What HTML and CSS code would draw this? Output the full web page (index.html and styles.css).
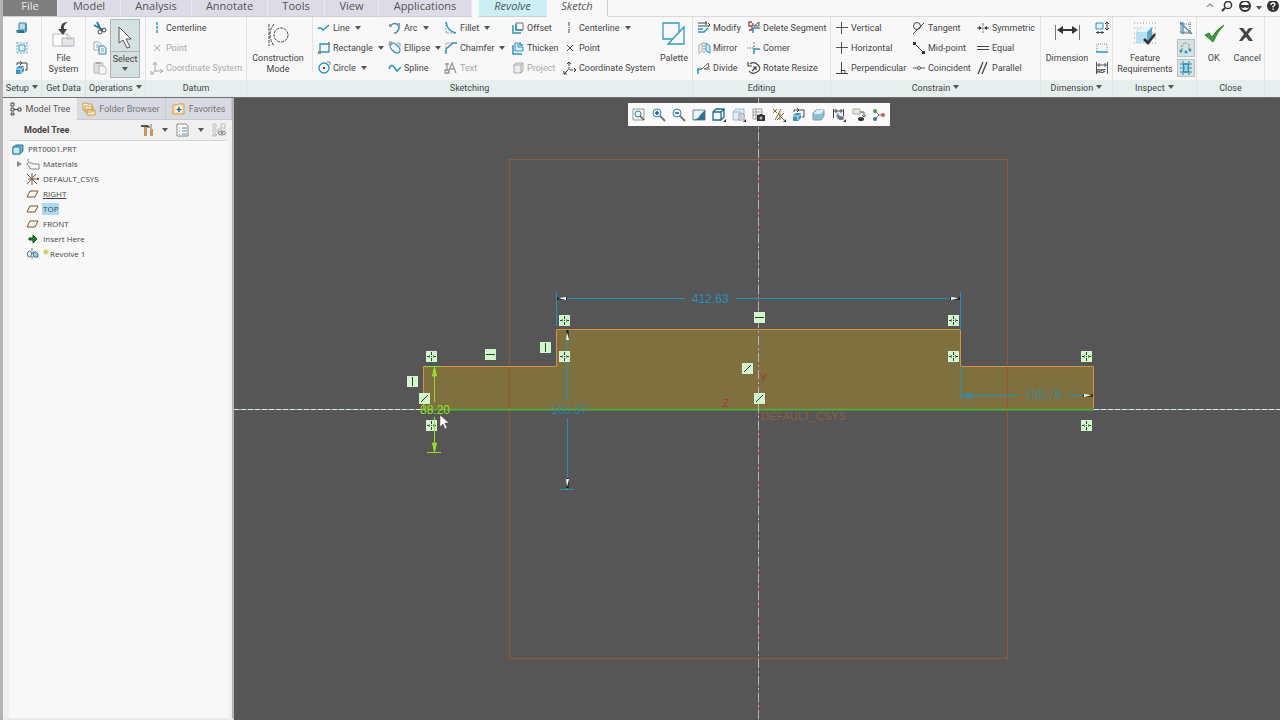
FILE: index.html
```html
<!DOCTYPE html>
<html lang="en">
<head>
  <meta charset="UTF-8">
  <meta name="viewport" content="width=device-width, initial-scale=1.0">
  <title>PRT0001 - Sketch</title>
  <link rel="stylesheet" href="styles.css">
</head>
<body>
  <nav class="tabs">
    <button class="tab file">File</button>
    <button class="tab model">Model</button>
    <button class="tab analysis">Analysis</button>
    <button class="tab annotate">Annotate</button>
    <button class="tab tools-tab">Tools</button>
    <button class="tab view">View</button>
    <button class="tab applications">Applications</button>
    <button class="tab revolve">Revolve</button>
    <button class="tab sketch">Sketch</button>
    <div class="corner">
      <button aria-label="Minimize ribbon"><svg width="12" height="14"><path d="M2 6l4-4 4 4H8L6 4 4 6z" fill="#999"/></svg></button>
      <button aria-label="Search"><svg width="14" height="14"><circle cx="8" cy="4" r="3.6" fill="none" stroke="#333" stroke-width="1.5"/><path d="M5 7L2 10" stroke="#333" stroke-width="2"/></svg></button>
      <button aria-label="Learning"><svg width="14" height="14"><circle cx="7" cy="5" r="5" fill="none" stroke="#333" stroke-width="2"/><path d="M3 4h8v2q-2 2-4 0-2 2-4 0z" fill="#333"/></svg></button>
      <i class="caret"></i>
      <button aria-label="Help"><svg width="14" height="14"><circle cx="7" cy="5" r="6" fill="#333"/><path d="M5 4q0-2 2-2t2 1.500q0 1-2 2v1M7 7.500v1.500" stroke="#fff" stroke-width="1.300" fill="none"/></svg></button>
    </div>
  </nav>

  <header class="ribbon">
    <section class="group setup">
      <div class="body stack">
        <button aria-label="Sketch setup"><svg class="ic"><path d="M4 2h7v7H4z" fill="#b9dcea" stroke="#2c86a8"/><path d="M1 9h8v3H2z" fill="#2c86a8"/><path d="M4 11h7V3" stroke="#1c5f7c" fill="none"/></svg></button>
        <button aria-label="References"><svg class="ic"><path d="M4 4h6v6H4z" fill="#e3f3f8" stroke="#2ba0c4"/><path d="M2 1v12M12 1v12M2 2h10M2 12h10" stroke="#6ab7d1" stroke-dasharray="2 1" fill="none"/></svg></button>
        <button aria-label="Sketch view"><svg class="ic"><path d="M1 7l3-2h5v5l-3 3H1z" fill="#3a96ba"/><path d="M1 8h5v4M6 8l3-2" stroke="#d7eef6" fill="none"/><path d="M6 2h6v7h-2" stroke="#444" fill="none"/><path d="M2 4V2h4M5 0l2 2-2 2" stroke="#444" fill="none"/></svg></button>
      </div>
      <button class="label">Setup <i class="caret"></i></button>
    </section>

    <section class="group getdata">
      <div class="body center">
        <button class="big"><svg class="big-ic" viewBox="0 0 28 28"><path d="M4 13h14l5 5v7H4z" fill="#fff" stroke="#b5b8be"/><path d="M13 17h12v8H13z" fill="#e4e6ea" stroke="#b5b8be"/><path d="M18 13v5h5" stroke="#b5b8be" fill="none"/><path d="M19 1q-8 0-7 7H9l5 6 4-6h-3q-1-4 4-7z" fill="#444"/></svg>File<br>System</button>
      </div>
      <div class="label">Get Data</div>
    </section>

    <section class="group operations">
      <div class="body row">
        <div class="stack">
          <button aria-label="Cut"><svg class="ic"><path d="M4 1l4 8M1 4l9 5" stroke="#287fa1" stroke-width="2"/><circle cx="11" cy="9" r="2" fill="none" stroke="#444"/><circle cx="7" cy="11" r="2" fill="none" stroke="#444"/></svg></button>
          <button aria-label="Copy"><svg class="ic"><path d="M1 1h5l2 2v6H1z" fill="#fff" stroke="#aaa"/><path d="M6 5h5l2 2v6H6z" fill="#eaf5fa" stroke="#3487a5"/><path d="M8 8h3M8 10h3M3 4h3M3 6h3" stroke="#77a9bb"/></svg></button>
          <button aria-label="Paste"><svg class="ic"><path d="M1 2h9v10H1z" fill="#ddd" stroke="#bbb"/><path d="M3 1h5v2H3z" fill="#aaa"/><path d="M6 5h5l2 2v6H6z" fill="#f5f5f5" stroke="#bbb"/></svg></button>
        </div>
        <button class="select"><span class="select-top"><svg width="20" height="28"><path d="M4 4v16l4-3 4 8 3-1-4-8h5z" fill="#fff" stroke="#555"/></svg></span>Select<i class="caret"></i></button>
      </div>
      <button class="label">Operations <i class="caret"></i></button>
    </section>

    <section class="group datum">
      <div class="body tools">
        <button><svg class="ic"><path d="M7 1v12" stroke="#2a9bc0" stroke-width="1.500" stroke-dasharray="3 1"/></svg>Centerline</button>
        <button disabled><svg class="ic"><path d="M4 4l6 6M10 4l-6 6" stroke="#aaa"/></svg>Point</button>
        <button disabled><svg class="ic"><path d="M5 2v8h8M5 10l-4 3M3 4l2-3 2 3M10 8l3 2-3 2M1 10v3h3" stroke="#aaa" fill="none"/></svg>Coordinate System</button>
      </div>
      <div class="label">Datum</div>
    </section>

    <section class="group sketching">
      <div class="body row">
        <button class="big construction"><svg class="big-ic" viewBox="0 0 28 28"><path d="M5 3v22M10 3q-8 10 0 22" stroke="#444" stroke-dasharray="3 1" fill="none"/><circle cx="17" cy="14" r="7" fill="none" stroke="#444" stroke-dasharray="3 1"/></svg>Construction<br>Mode</button>
        <div class="tools">
          <button><svg class="ic"><path d="M1 8q2-3 5 1l6-5" stroke="#2893bd" stroke-width="1.500" fill="none"/></svg>Line<i class="caret"></i></button>
          <button><svg class="ic"><path d="M3 3h9v8H3z" stroke="#2893bd" stroke-width="1.300" fill="none"/><path d="M1 10h3v3H1zM11 1h2v3h-2z" fill="#888"/></svg>Rectangle<i class="caret"></i></button>
          <button><svg class="ic"><circle cx="7" cy="7" r="5" stroke="#2893bd" stroke-width="1.300" fill="none"/><circle cx="7" cy="7" r="1.300" fill="#555"/><path d="M10 1h3v3" stroke="#888" fill="none"/></svg>Circle<i class="caret"></i></button>
          <button><svg class="ic"><path d="M3 4q4-3 7 0t-2 8" stroke="#2893bd" stroke-width="1.500" fill="none"/><path d="M1 3h3v3H1zM10 2h2v3h-2zM6 11h2v2H6z" fill="#999"/></svg>Arc<i class="caret"></i></button>
          <button><svg class="ic"><ellipse cx="7" cy="7" rx="6" ry="3.500" transform="rotate(45 7 7)" stroke="#2893bd" stroke-width="1.300" fill="none"/><path d="M1 1h3v3H1zM9 2h3v3" stroke="#999" fill="none"/></svg>Ellipse<i class="caret"></i></button>
          <button><svg class="ic"><path d="M1 8q2-6 5-2t3 4 4-4" stroke="#2893bd" stroke-width="1.500" fill="none"/></svg>Spline</button>
          <button><svg class="ic"><path d="M2 1v11h10" stroke="#999" stroke-dasharray="2 1" fill="none"/><path d="M2 1q1 9 10 11" stroke="#2893bd" stroke-width="1.500" fill="none"/></svg>Fillet<i class="caret"></i></button>
          <button><svg class="ic"><path d="M2 13V8l7-6h4" stroke="#2893bd" stroke-width="1.500" fill="none"/><path d="M2 7V2h6" stroke="#999" stroke-dasharray="2 1" fill="none"/></svg>Chamfer<i class="caret"></i></button>
          <button disabled><svg class="ic"><path d="M4 12l4-10 4 10M6 8h5M3 2v8M1 3h4M1 9h4v3H1z" stroke="#999" stroke-width="1.300" fill="none"/></svg>Text</button>
          <button><svg class="ic"><path d="M5 2h7v7H5z" stroke="#777" fill="none"/><path d="M2 4v8h8M5 3v6h7" stroke="#2893bd" stroke-width="1.500" fill="none"/></svg>Offset</button>
          <button><svg class="ic"><path d="M4 2h3v4h5v4H4z" stroke="#2893bd" fill="#d9eff7"/><path d="M2 4v9h9M9 1v3h3" stroke="#2893bd" stroke-width="1.500" fill="none"/></svg>Thicken</button>
          <button disabled><svg class="ic"><path d="M3 4l2-2h7v8l-2 2H3zM3 4h7v8M10 4l2-2" stroke="#aaa" fill="#eee"/></svg>Project</button>
          <button><svg class="ic"><path d="M6 1v12" stroke="#444" stroke-dasharray="4 1 1 1"/></svg>Centerline<i class="caret"></i></button>
          <button><svg class="ic"><path d="M4 4l6 6M10 4l-6 6" stroke="#444"/></svg>Point</button>
          <button><svg class="ic"><path d="M6 2v7h7" stroke="#444" stroke-dasharray="3 1" fill="none"/><path d="M5 9l-4 4M1 10v3h3M4 3l2-2 2 2M11 7l2 2-2 2" stroke="#333" fill="none"/></svg>Coordinate System</button>
        </div>
        <button class="big palette"><svg class="big-ic" viewBox="0 0 28 28"><path d="M3 2h16v16H3z" stroke="#2d9bc5" stroke-width="1.300" fill="none"/><path d="M24 6v17H8z" stroke="#2d9bc5" stroke-width="1.300" fill="#f8f8f8"/></svg>Palette</button>
      </div>
      <div class="label">Sketching</div>
    </section>

    <section class="group editing">
      <div class="body tools">
        <button><svg class="ic"><path d="M1 2h9M1 5h11M9 0v4M11 2l2 2-2 2" stroke="#444" fill="none"/><path d="M1 11h6l4-4M1 8h5" stroke="#2893bd" stroke-width="1.500" fill="none"/></svg>Modify</button>
        <button><svg class="ic"><path d="M2 4l3-2v8l-3 2z" fill="none" stroke="#aaa"/><path d="M7 1v12" stroke="#888" stroke-dasharray="2 1"/><path d="M9 2l4 3v7l-4-2z" fill="#d1ebf5" stroke="#2893bd"/></svg>Mirror</button>
        <button><svg class="ic"><path d="M1 13V8h4" stroke="#2893bd" stroke-width="1.500" fill="none"/><path d="M7 8h6M5 8l6-6 1 4-5 2" stroke="#666" fill="none"/></svg>Divide</button>
        <button><svg class="ic"><path d="M5 1H2v4h3v4H2M6 5V2" stroke="#a5443f" stroke-width="1.300" fill="none"/><path d="M6 12V7h7" stroke="#2893bd" stroke-width="1.500" fill="none"/><path d="M7 5l5-4v4z" stroke="#555" fill="none"/></svg>Delete Segment</button>
        <button><svg class="ic"><path d="M7 13V8h6" stroke="#2893bd" stroke-width="1.500" fill="none"/><path d="M7 1v6H0" stroke="#777" stroke-dasharray="2 1" fill="none"/></svg>Corner</button>
        <button><svg class="ic"><path d="M3 3q4-3 8 1t-1 7-8-1M1 1v4h4M5 10l4-4M6 6h3v3" stroke="#444" fill="none" stroke-width="1.200"/></svg>Rotate Resize</button>
      </div>
      <div class="label">Editing</div>
    </section>

    <section class="group constrain">
      <div class="body tools">
        <button><svg class="ic"><path d="M6.500 1v12M1 6.500h12" stroke="#555"/></svg>Vertical</button>
        <button><svg class="ic"><path d="M6.500 1v12M1 6.500h12" stroke="#555"/></svg>Horizontal</button>
        <button><svg class="ic"><path d="M6.500 1v11M1 12.500h12M6 9.500h4v3" stroke="#444" fill="none"/></svg>Perpendicular</button>
        <button><svg class="ic"><circle cx="5" cy="5" r="3.500" fill="none" stroke="#444"/><path d="M1 13L12 2" stroke="#444"/></svg>Tangent</button>
        <button><svg class="ic"><path d="M2 2l9 9" stroke="#444"/><path d="M1 1h3v3H1zM10 10h3v3h-3z" fill="#333"/></svg>Mid-point</button>
        <button><svg class="ic"><path d="M1 7h4M9 7h4" stroke="#555"/><circle cx="7" cy="7" r="1.500" stroke="#555" fill="none"/></svg>Coincident</button>
        <button><svg class="ic"><path d="M7 2v10" stroke="#777" stroke-dasharray="3 1"/><path d="M1 7h4M9 7h4" stroke="#333"/><path d="M3 5l3 2-3 2zM11 5L8 7l3 2z" fill="#333"/></svg>Symmetric</button>
        <button><svg class="ic"><path d="M1 5.500h12M1 8.500h12" stroke="#444"/></svg>Equal</button>
        <button><svg class="ic"><path d="M2 13L7 1M6 13L11 1" stroke="#444" stroke-width="1.300"/></svg>Parallel</button>
      </div>
      <button class="label">Constrain <i class="caret"></i></button>
    </section>

    <section class="group dimension">
      <div class="body row">
        <button class="big"><svg class="big-ic" viewBox="0 0 28 28"><path d="M2.500 4v15M26.500 4v15" stroke="#777"/><path d="M7 9h14" stroke="#333" stroke-width="2"/><path d="M4 9l6-4v8zM25 9l-6-4v8z" fill="#333"/></svg>Dimension</button>
        <div class="stack">
          <button aria-label="Perimeter"><svg class="ic"><path d="M1 2h7v6H1z" stroke="#2893bd" fill="#e3f3f8"/><path d="M12 1v8M10 3l2-2 2 2M10 7l2 2 2-2M1 11.500h8M3 10v3M7 10v3" stroke="#444" fill="none"/></svg></button>
          <button aria-label="Baseline"><svg class="ic"><path d="M2 10V3h10v7" stroke="#888" stroke-dasharray="1 1" fill="none"/><path d="M1 11h12" stroke="#2893bd" stroke-width="1.500"/></svg></button>
          <button aria-label="Reference dimension"><svg class="ic"><path d="M1.500 1v12M12.500 1v12M2 4h10M4 2v4M10 2v4" stroke="#555"/><text x="2" y="12" font-size="5" font-weight="700" fill="#333">REF</text></svg></button>
        </div>
      </div>
      <button class="label">Dimension <i class="caret"></i></button>
    </section>

    <section class="group inspect">
      <div class="body row">
        <button class="big"><svg class="big-ic" viewBox="0 0 28 28"><path d="M3 2h22M3 7h22M3 12h22M3 17h22M3 22h22" stroke="#999" stroke-dasharray="1 2"/><path d="M5 11l5-5h11v11l-5 5H5z" fill="#5aa9c8"/><path d="M5 11h11v11H5z" fill="#b6e1f2"/><path d="M5 11l5-5h11l-5 5z" fill="#e4f6fc"/><path d="M13 18l4 4 7-9" stroke="#333" stroke-width="2.500" fill="none"/></svg>Feature<br>Requirements</button>
        <div class="stack">
          <button aria-label="Overlapping geometry"><svg class="ic"><path d="M2 12V2l10 10z" stroke="#777" fill="none"/><path d="M1 1l12 12M4 1v12" stroke="#2893bd" stroke-width="1.300"/><path d="M1 11h12M11 1v12M1 3h12" stroke="#777" stroke-dasharray="1 1"/></svg></button>
          <button class="on" aria-label="Highlight open ends"><svg class="ic"><path d="M3 9V4q4-4 7 0v4" stroke="#888" stroke-dasharray="2 1" fill="none"/><circle cx="2" cy="10" r="1.500" fill="#2893bd"/><circle cx="7" cy="11" r="1.500" fill="#2893bd"/><circle cx="11" cy="9" r="1.500" fill="#2893bd"/></svg></button>
          <button class="on" aria-label="Shade closed loops"><svg class="ic"><path d="M4 3h6L9 7l1 4H4l1-4z" fill="#9fd3e6" stroke="#1f86ae" stroke-width="1.300"/><path d="M1 3h2M11 3h2M1 7h3M10 7h3M1 11h2M11 11h2M4 0v2M10 0v2M4 12v2M10 12v2" stroke="#1f86ae"/></svg></button>
        </div>
      </div>
      <button class="label">Inspect <i class="caret"></i></button>
    </section>

    <section class="group close">
      <div class="body row">
        <button class="big"><svg class="big-ic" viewBox="0 0 28 28"><path d="M5 14l4-2 3 4q5-8 12-12Q17 11 13 21z" fill="#3c9f3d" stroke="#287d2d"/></svg>OK</button>
        <button class="big"><svg class="big-ic" viewBox="0 0 28 28"><path d="M6 7h4l3 4 3-4h4l-5 6 5 7h-4l-3-4-4 4H6l5-7z" fill="#444"/></svg>Cancel</button>
      </div>
      <div class="label">Close</div>
    </section>
    <div class="group rest"><div class="body"></div><div class="label"></div></div>
  </header>

  <main>
    <aside>
      <div class="side-tabs">
        <button class="active"><svg class="ic"><path d="M2 1h3v3H2zM2 6h3v3H2zM2 11h3v2H2zM9 6h3v3H9zM5 7.500h4" stroke="#444" fill="none"/></svg>Model Tree</button>
        <button><svg class="ic"><path d="M1 1h4l1 1h4v6H1zM3 4h4l1 1h3v5H3zM5 7h3l1 1h4v5H5z" fill="#fff0cb" stroke="#c79c4f"/></svg>Folder Browser</button>
        <button><svg class="ic"><path d="M1 3h4l1-1h6v10H1z" fill="#fbe1a6" stroke="#d0a254"/><path d="M4 5h6v5H4z" fill="#fff"/><path d="M7 5v5M4.500 7.500h5" stroke="#246b9b" stroke-width="1.500"/></svg>Favorites</button>
      </div>
      <div class="tree-head">
        <h2>Model Tree</h2>
        <button aria-label="Settings"><svg class="ic"><path d="M1 2h7l2 2-1 1-3-1H1z" fill="#555"/><path d="M4 4h3v9H4z" fill="#c99753"/><path d="M11 1v6" stroke="#777"/><path d="M10 6h3v7h-3z" fill="#c99753"/></svg></button>
        <i class="caret"></i>
        <button aria-label="Show"><svg class="ic"><path d="M1 1h9l2 2v10H1z" fill="#fff" stroke="#888"/><path d="M3 5h1M6 5h5M3 8h1M6 8h5M3 11h1M6 11h5" stroke="#4b88a0"/></svg></button>
        <i class="caret"></i>
        <button class="filter" aria-label="Tree filters"><svg class="ic"><path d="M1 1h3v3H1zM1 6h3v3H1zM1 11h3v2H1zM6 6h3v3H6zM9 1h4v4H9z" fill="none" stroke="#bbb"/><ellipse cx="10" cy="10" rx="4" ry="2" fill="#ddd" stroke="#888"/><circle cx="10" cy="10" r="1" fill="#777"/></svg></button>
      </div>
      <ul class="tree">
        <li class="root"><svg class="ic"><path d="M2 5l3-2h7v6l-3 3H2z" fill="#5eb4d6" stroke="#2b7b9e"/><path d="M2 5h7v7H2z" fill="#c5e9f7" stroke="#2b7b9e"/></svg><span>PRT0001.PRT</span></li>
        <li class="parent"><i class="arrow"></i><svg class="ic"><path d="M3 2q-3 1 0 3-4 2 0 4 0 3 3 3h7V7H7L6 6H3" fill="none" stroke="#888"/></svg><span>Materials</span></li>
        <li><svg class="ic"><path d="M1 2l10 10M1 12L10 2M6 1v12M2 7h10" stroke="#73573a"/><circle cx="12" cy="7" r="1" fill="#444"/></svg><span>DEFAULT_CSYS</span></li>
        <li><svg class="ic"><path d="M4 4h8l-3 6H1z" fill="#fffaf2" stroke="#75532c"/></svg><span class="under">RIGHT</span></li>
        <li><svg class="ic"><path d="M4 4h8l-3 6H1z" fill="#fffaf2" stroke="#75532c"/></svg><span class="picked">TOP</span></li>
        <li><svg class="ic"><path d="M4 4h8l-3 6H1z" fill="#fffaf2" stroke="#75532c"/></svg><span>FRONT</span></li>
        <li><svg class="ic"><path d="M3 6h4V3l4 4-4 4V8H3z" fill="#128a22" stroke="#0b5514"/></svg><span>Insert Here</span></li>
        <li><svg class="ic"><path d="M6 1v12" stroke="#777" stroke-dasharray="3 1"/><ellipse cx="3.500" cy="7" rx="2" ry="3" fill="none" stroke="#4b7d92"/><path d="M7 5h3l2 2v3H8z" fill="#98cde1" stroke="#2b7b9e"/></svg><span><svg class="star" viewBox="0 0 8 8"><path d="M4 0v8M0 4h8M1 1l6 6M7 1L1 7" stroke="#c8b400"/></svg>Revolve 1</span></li>
      </ul>
    </aside>

    <div class="canvas">
      <svg class="drawing" viewBox="234 98 1046 622" preserveAspectRatio="xMidYMid slice">
        <defs>
          <g id="sym"><rect class="badge" width="11" height="11"/><path d="M5.500 1v3M5.500 5v1M5.500 7v3M1 5.500h3M7 5.500h3" stroke="#24452a"/><path d="M3.500 4v3M7.500 4v3" stroke="#6d9270"/></g>
          <g id="hor"><rect class="badge" width="11" height="11"/><path d="M1 5.500h9" stroke="#24452a"/></g>
          <g id="ver"><rect class="badge" width="11" height="11"/><path d="M5.500 1v9" stroke="#24452a"/></g>
          <g id="coin"><rect class="badge" width="11" height="11"/><path d="M2 9l7-7" stroke="#24452a"/></g>
        </defs>
        <!-- shaded section -->
        <path class="shade" d="M423.500 409V366.500H556.500V329.500H960.500V366.500H1093.500V409z"/>
        <!-- datum planes -->
        <rect class="plane" x="509.500" y="159.500" width="498" height="499"/>
        <path class="outline" d="M423.500 409V366.500H556.500V329.500H960.500V366.500H1093.500V409"/>
        <path d="M234 409.500h190M1094 409.500h190" stroke="#6fa3a0"/>
        <path d="M234 409.500h190M1094 409.500h190" stroke="#e4e4e4" stroke-dasharray="5 2"/>
        <path class="plane" d="M424 408.500h670"/>
        <path class="axis" d="M424 409.500h670"/>
        <path d="M758.500 98v622" stroke="#a65b63"/>
        <path d="M758.500 98v622" stroke="#b7b2b8" stroke-dasharray="9 3 2 3"/>
        <!-- weak dimensions -->
        <g class="weak">
          <path d="M556.500 292v34M960.500 292v38M557 298.500h128M736 298.500h224"/>
          <path d="M567.500 330v70M567.500 418v71M560 489.500h14"/>
          <path d="M960.500 366v35M961 395.500h57M1068 395.500h25"/>
          <path d="M961 395.500l10-2v4z" class="head"/>
          <text x="692" y="303">412.63</text>
          <text class="faint" x="551" y="414">163.37</text>
          <text class="faint" x="1025" y="399">135.76</text>
        </g>
        <g class="tip">
          <path d="M557 298.500h10M960 298.500h-10M567.500 330v10M567.500 488v-10M1093 395.500h-10"/>
        </g>
        <g class="white-head">
          <path d="M558 298l8-1v3zM959 298l-8-1v3zM567 332l-1 8h3zM567 487l-1-8h3zM1092 395l-8-1v3z"/>
        </g>
        <g class="csys">
          <text x="760" y="382">Y</text><text x="760" y="405">X</text><text x="723" y="407">Z</text>
          <text class="csys-name" x="761" y="420">DEFAULT_CSYS</text>
        </g>
        <use href="#sym" x="559" y="315"/><use href="#sym" x="559" y="351"/>
        <use href="#sym" x="948" y="315"/><use href="#sym" x="948" y="351"/>
        <use href="#sym" x="426" y="351"/><use href="#sym" x="426" y="420"/>
        <use href="#sym" x="1081" y="351"/><use href="#sym" x="1081" y="420"/>
        <use href="#hor" x="485" y="349"/><use href="#hor" x="754" y="312"/>
        <use href="#ver" x="540" y="342"/><use href="#ver" x="407" y="376"/>
        <use href="#coin" x="742" y="363"/><use href="#coin" x="754" y="393"/><use href="#coin" x="419" y="393"/>
        <!-- dimension being dragged -->
        <g class="active-dim">
          <path d="M424 366.500h17M434.500 367v35M434.500 417v35M427 452.500h14"/>
          <path class="head" d="M434.500 367l-2 9h4zM434.500 452l-2-9h4z"/>
          <text x="420" y="414">88.20</text>
        </g>
        <path d="M440 415v12l3-3 2 5 2-1-2-5h4z" fill="#fff" stroke="#444" stroke-width=".5"/>
      </svg>

      <div class="view-bar">
        <button aria-label="Refit"><svg class="ic"><path d="M1 1h11v11H1z" fill="#f4f4f4" stroke="#999"/><circle cx="6" cy="6" r="3" fill="#e2f3fa" stroke="#447f97"/><path d="M8 8l4 4" stroke="#555" stroke-width="1.500"/></svg></button>
        <button aria-label="Zoom in"><svg class="ic"><circle cx="5" cy="5" r="4" fill="#e2f3fa" stroke="#447f97"/><path d="M3 5h4M5 3v4" stroke="#17668a" stroke-width="1.500"/><path d="M8 8l5 5" stroke="#777" stroke-width="2"/></svg></button>
        <button aria-label="Zoom out"><svg class="ic"><circle cx="5" cy="5" r="4" fill="#e2f3fa" stroke="#447f97"/><path d="M3 5h4" stroke="#17668a" stroke-width="1.500"/><path d="M8 8l5 5" stroke="#777" stroke-width="2"/></svg></button>
        <button aria-label="Repaint"><svg class="ic"><path d="M1 2h12v10H1z" fill="#e6f2f6" stroke="#6a8c99"/><path d="M13 2v10H1q6-1 7-5z" fill="#2b7391"/></svg></button>
        <button aria-label="Display style"><svg class="ic"><path d="M1 4l3-3h8v8l-3 3H1zM1 4h8v8M9 4l3-3" fill="#f4fbfd" stroke="#1f6c8b" stroke-width="1.300"/><path d="M14 11v3h-3z" fill="#333"/></svg></button>
        <button aria-label="Saved orientations"><svg class="ic"><path d="M1 4l3-3h8v8l-3 3H1zM1 4h8v8" fill="#dceef5" stroke="#97bfcd"/><path d="M7 6h5v6H7z" fill="#fff" stroke="#999"/><path d="M8 8h3M8 10h3" stroke="#999"/><path d="M14 11v3h-3z" fill="#333"/></svg></button>
        <button aria-label="View manager"><svg class="ic"><path d="M1 1h9v10H1zM1 4h9M1 7h9M4 1v10" fill="#fff" stroke="#999"/><path d="M5 7h2l1-1h2l1 1h2v6H5z" fill="#333"/><circle cx="9" cy="10" r="1.500" fill="#bbb"/></svg></button>
        <button aria-label="Datum display"><svg class="ic"><path d="M1 1l4 4M5 1L1 5M3 12L9 1M8 5v7M5 12l7-7M6 6l6 6" stroke="#85662c" fill="none"/><path d="M14 11v3h-3z" fill="#333"/></svg></button>
        <button aria-label="Sketch view"><svg class="ic"><path d="M1 7l3-2h5v5l-3 3H1z" fill="#3a96ba"/><path d="M1 8h5v4M6 8l3-2" stroke="#d7eef6" fill="none"/><path d="M7 2h5v7h-2M2 4V2h4M5 0l2 2-2 2" stroke="#444" fill="none"/></svg></button>
        <button aria-label="Clip model"><svg class="ic"><path d="M1 5l3-3h8v6l-3 4H1z" fill="#8bbfd2" stroke="#7e9da8"/><path d="M2 5l3-3h7L9 6H2z" fill="#d8eef6"/></svg></button>
        <button aria-label="Dimension display"><svg class="ic"><path d="M1.500 1v9M11.500 1v7M2 3h9M4 1v4M9 1v4" stroke="#444"/><path d="M6 5v6M4 8h4" stroke="#2b7391"/><ellipse cx="9" cy="10" rx="3" ry="2" fill="#777"/><path d="M14 11v3h-3z" fill="#333"/></svg></button>
        <button aria-label="Annotation display"><svg class="ic"><path d="M1 1h7v5H1z" fill="#eee6d4" stroke="#aaa"/><path d="M8 4h4v5M10 7l2 2 2-2" stroke="#555" fill="none"/><ellipse cx="9" cy="11" rx="3" ry="2" fill="#333"/></svg></button>
        <button aria-label="Spin center"><svg class="ic"><path d="M3 3l4 4-4 4M7 7h5" stroke="#777" fill="none"/><circle cx="3" cy="3" r="2" fill="#4b9b5a"/><circle cx="3" cy="11" r="2" fill="#2f7ca0"/><circle cx="11" cy="7" r="2" fill="#d2584a"/></svg></button>
      </div>
    </div>
  </main>
</body>
</html>
```

FILE: styles.css
```css
* {
  margin: 0;
  padding: 0;
  box-sizing: border-box;
}

body {
  display: flex;
  flex-direction: column;
  height: 100vh;
  overflow: hidden;
  border-left: 3px solid #b4b4b4;
  background-color: #f8f8f8;
  color: #444;
  font-family: "Open Sans", "Noto Sans", sans-serif;
  font-size: 9px;
  line-height: 12px;
}

button {
  border: none;
  background: none;
  color: inherit;
  font: inherit;
}

svg {
  display: block;
  flex: none;
}

.ic {
  width: 14px;
  height: 14px;
}

.caret {
  display: inline-block;
  flex: none;
  border: 3px solid transparent;
  border-top: 4px solid #555;
  border-bottom: none;
}

/* Tabs */
.tabs {
  display: flex;
  flex: none;
  height: 17px;
}

.tab {
  height: 17px;
  padding-bottom: 4px;
  border-right: 1px solid #e9e8ef;
  border-bottom: 1px solid #cfcfd6;
  background-color: #dddce6;
  color: #555;
  font-size: 11px;
}

.tab.file {
  width: 55px;
  background-color: #7f7f7f;
  color: #e8e8e8;
}

.tab.model {
  width: 63px;
}

.tab.analysis {
  width: 71px;
}

.tab.annotate {
  width: 76px;
}

.tab.tools-tab {
  width: 57px;
}

.tab.view {
  width: 54px;
}

.tab.applications {
  width: 93px;
}

.tab.revolve {
  width: 68px;
  margin-left: 7px;
  background-color: #caf0f5;
  font-style: italic;
}

.tab.sketch {
  width: 61px;
  border-right: 1px solid #cfcfd6;
  border-bottom-color: #f8f8f8;
  background-color: #f8f8f8;
  font-style: italic;
}

.corner {
  display: flex;
  flex: 1;
  align-items: center;
  justify-content: flex-end;
  gap: 4px;
  border-bottom: 1px solid #dcdcdf;
}

/* Ribbon */
.ribbon {
  display: flex;
  flex: none;
  height: 81px;
  border-bottom: 1px solid #6e7070;
  font-family: Roboto, "Open Sans", sans-serif;
}

.group {
  display: flex;
  flex: none;
  flex-direction: column;
  border-right: 1px solid #dfe3e3;
}

.body {
  height: 63px;
}

.row {
  display: flex;
}

.center {
  display: flex;
  justify-content: center;
}

.label {
  height: 17px;
  background-color: #e6eeee;
  line-height: 17px;
  text-align: center;
}

.label .caret {
  margin: 0 0 2px 1px;
}

.setup {
  width: 39px;
}

.getdata {
  width: 44px;
}

.operations {
  width: 60px;
}

.datum {
  width: 101px;
}

.sketching {
  width: 446px;
}

.editing {
  width: 138px;
}

.constrain {
  width: 210px;
}

.dimension {
  width: 72px;
}

.inspect {
  width: 84px;
}

.close {
  width: 68px;
}

.rest {
  flex: 1;
  border: none;
}

.stack {
  display: flex;
  flex-direction: column;
  align-items: center;
  padding-top: 1px;
}

.stack button {
  display: flex;
  align-items: center;
  justify-content: center;
  width: 18px;
  height: 18px;
  margin: 1px 0;
}

.stack .on {
  border: 1px solid #b5c3c3;
  background-color: #d5e0e0;
}

.big {
  display: flow-root;
  align-self: flex-start;
  line-height: 11px;
  text-align: center;
}

.big-ic {
  width: 28px;
  height: 28px;
  margin: 4px auto;
}

.tools {
  display: grid;
  grid-auto-flow: column;
  grid-template-rows: repeat(3, 20px);
  padding-top: 1px;
}

.tools button {
  display: flex;
  align-items: center;
  gap: 2px;
  white-space: nowrap;
}

.tools button:disabled {
  color: #aaa;
}

.tools .caret {
  margin-left: 3px;
}

.operations .row {
  padding-left: 5px;
}

.select {
  width: 30px;
  height: 59px;
  margin: 2px 0 0 1px;
  border: 1px solid #a9b6b6;
  background-color: #d5e0e0;
  line-height: 11px;
}

.select-top {
  display: flex;
  justify-content: center;
  height: 29px;
  margin-bottom: 2px;
  border-bottom: 1px solid #a9b6b6;
}

.select .caret {
  display: block;
  width: 6px;
  margin: 2px auto 4px;
}

.datum .tools {
  padding-left: 4px;
}

.construction {
  width: 65px;
  padding-right: 3px;
}

.sketching .tools {
  grid-template-columns: 71px 56px 67px 52px 94px;
  height: 56px;
  padding-left: 4px;
  border-left: 1px solid #dfe3e3;
}

.palette {
  width: 34px;
}

.editing .tools {
  grid-template-columns: 50px 84px;
  padding-left: 4px;
}

.constrain .tools {
  grid-template-columns: 77px 64px 64px;
  padding-left: 4px;
}

.dimension .big {
  width: 52px;
}

.inspect .big {
  width: 64px;
}

.close .big {
  width: 34px;
}

/* Model tree */
main {
  display: flex;
  flex: 1;
  min-height: 0;
}

aside {
  width: 231px;
  border-right: 2px solid #b4b4b4;
  border-bottom: 2px solid #ececec;
  background-color: #f0f0f0;
  font-size: 8px;
}

.side-tabs {
  display: flex;
  height: 22px;
}

.side-tabs button {
  display: flex;
  align-items: center;
  justify-content: center;
  gap: 3px;
  flex: 1 1 auto;
  border: 1px solid #c9c9d0;
  border-width: 0 1px 1px 0;
  background-color: #d9d9e1;
  color: #777;
  font-family: Roboto, "Open Sans", sans-serif;
  font-size: 9px;
}

.side-tabs .active {
  border-color: #f0f0f0;
  background-color: #f0f0f0;
  color: #555;
}

.tree-head {
  display: flex;
  align-items: center;
  gap: 8px;
  height: 21px;
  margin: 0 6px;
  padding-left: 15px;
  border-bottom: 1px solid #d5d5d5;
}

.tree-head h2 {
  flex: 1;
  font-family: Roboto, "Open Sans", sans-serif;
  font-size: 9px;
}

.tree {
  height: calc(100% - 43px);
  margin: 0 3px 0 6px;
  background-color: #f8f8f8;
  list-style: none;
}

.tree li {
  display: flex;
  align-items: center;
  gap: 2px;
  height: 15px;
  padding-left: 17px;
}

.tree .root {
  padding-left: 2px;
}

.tree .parent {
  padding-left: 8px;
}

.tree .ic {
  margin-right: 1px;
}

.arrow {
  width: 7px;
  border: 3px solid transparent;
  border-right: none;
  border-left: 5px solid #888;
}

.under {
  text-decoration: underline;
}

.picked {
  margin-left: -1px;
  padding: 0 1px;
  background-color: #a9dbf5;
}

.star {
  display: inline-block;
  width: 6px;
  height: 6px;
  margin: 0 1px 2px 0;
}

/* Graphics area */
.canvas {
  position: relative;
  flex: 1;
  min-width: 0;
  background-color: #565656;
}

.drawing {
  width: 100%;
  height: 100%;
  fill: none;
  font-family: "Liberation Sans", sans-serif;
  font-size: 12px;
}

.shade {
  fill: #7e713f;
}

.plane {
  stroke: #8c5a34;
}

.axis {
  stroke: #4fae3c;
  stroke-width: 2;
}

.outline {
  stroke: #dd9136;
}

.badge {
  fill: #d3f5cd;
}

.weak {
  stroke: #2490b8;
}

.weak text {
  fill: #2490b8;
  stroke: none;
}

.weak .faint {
  opacity: 0.7;
}

.weak .head {
  fill: #2490b8;
}

.tip {
  stroke: #111;
  stroke-width: 2;
}

.white-head {
  fill: #fff;
}

.csys {
  fill: #a33c33;
  font-size: 11px;
}

.csys .csys-name {
  fill: #87603c;
}

.active-dim {
  stroke: #94df24;
}

.active-dim text {
  fill: #94df24;
  stroke: none;
}

.active-dim .head {
  fill: #94df24;
}

.view-bar {
  display: flex;
  position: absolute;
  top: 5px;
  left: 50%;
  transform: translateX(-50%);
  margin-left: 2px;
  padding: 0 1px;
  background-color: #fafafa;
}

.view-bar button {
  display: flex;
  align-items: center;
  justify-content: center;
  width: 20px;
  height: 23px;
}
```
